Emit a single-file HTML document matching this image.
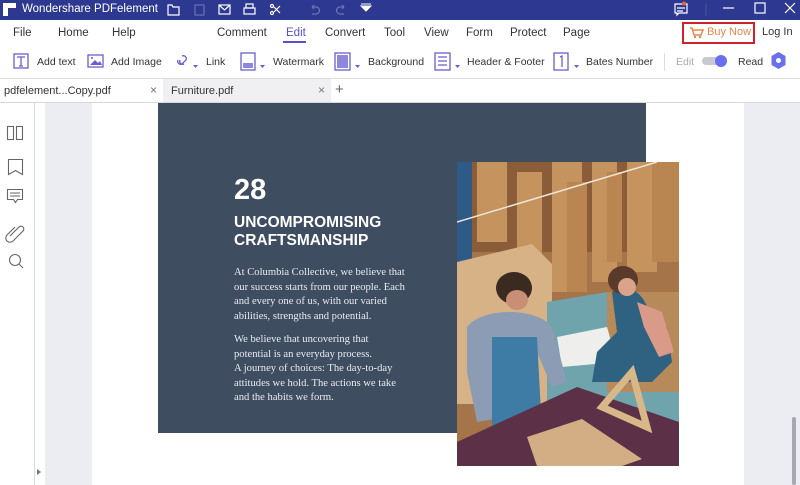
<!DOCTYPE html>
<html><head><meta charset="utf-8"><style>
*{margin:0;padding:0;box-sizing:border-box}
body{width:800px;height:485px;overflow:hidden;background:#fff;font-family:"Liberation Sans",sans-serif;position:relative;color:#333}
.a{position:absolute;white-space:nowrap}
.m{font-size:11.5px;color:#333;top:27px}
.t{font-size:10.5px;color:#333;top:56px}
.ser{font-family:"Liberation Serif",serif;font-size:10.6px;color:#e8ecf2;line-height:14.6px}
</style></head><body>
<div class="a" style="left:0;top:0;width:800px;height:20px;background:#2d3990"></div>
<svg class="a" style="left:0;top:0" width="800" height="20">
<rect x="3" y="3" width="13" height="13" fill="#fff"/><rect x="8" y="8" width="8" height="8" fill="#2d3990"/>
<g fill="none" stroke="#fff" stroke-width="1.2">
<path d="M168 5h4l1 2h6v8h-11z"/>
<rect x="195" y="5" width="9" height="10" stroke="#6b74b5"/>
<rect x="219" y="5" width="11" height="9"/><path d="M219 5l5.5 5 5.5-5"/>
<rect x="244" y="8" width="11" height="6"/><rect x="246" y="4" width="7" height="4"/>
<circle cx="272" cy="6" r="1.5"/><circle cx="272" cy="13" r="1.5"/><path d="M274 7l6 6M274 12l6-6"/>
<path d="M312 7h4a3 3 0 010 7h-4M312 7l2-2M312 7l2 2" stroke="#6b74b5"/>
<path d="M344 7h-4a3 3 0 000 7h4M344 7l-2-2M344 7l-2 2" stroke="#6b74b5"/>
<path d="M675 4h12v9h-8l-2 2v-2h-2z"/><path d="M677 8h8M677 11h6"/>
<path d="M723 8h11"/><rect x="755" y="3" width="10" height="10"/><path d="M785 3l10 10M795 3l-10 10"/>
</g>
<path d="M361 4h10M361 6h10l-5 5z" fill="#fff" stroke="#fff"/>
<circle cx="684" cy="3.5" r="2" fill="#e8623a"/>
<path d="M706 4v12" stroke="#4a55a0"/>
</svg>
<div class="a" style="left:22px;top:3px;color:#fff;font-size:11.5px">Wondershare PDFelement</div>
<div class="a m" style="left:13px">File</div>
<div class="a m" style="left:58px">Home</div>
<div class="a m" style="left:112px">Help</div>
<div class="a m" style="left:217px">Comment</div>
<div class="a m" style="left:286px;color:#5a4fcf">Edit</div>
<div class="a" style="left:283px;top:41px;width:23px;height:2px;background:#5a4fcf"></div>
<div class="a m" style="left:325px">Convert</div>
<div class="a m" style="left:384px">Tool</div>
<div class="a m" style="left:424px">View</div>
<div class="a m" style="left:466px">Form</div>
<div class="a m" style="left:510px">Protect</div>
<div class="a m" style="left:563px">Page</div>
<div class="a" style="left:682px;top:22px;width:73px;height:22px;border:2px solid #d0222c"></div>
<svg class="a" style="left:690px;top:27px" width="14" height="12"><path d="M0 1h2l2 7h7l2-5H3" fill="none" stroke="#e8874a" stroke-width="1.5"/><circle cx="5" cy="10" r="1.2" fill="#e8874a"/><circle cx="10" cy="10" r="1.2" fill="#e8874a"/></svg>
<div class="a" style="left:707px;top:26px;font-size:11px;color:#e8874a">Buy Now</div>
<div class="a" style="left:762px;top:26px;font-size:11px;color:#333">Log In</div>
<svg class="a" style="left:0;top:44px" width="800" height="36">
<g fill="none" stroke="#6a5fcf" stroke-width="1.3">
<rect x="14" y="10" width="14" height="14"/>
<path d="M17 13h8M21 13v9M19 22h4"/>
<rect x="88" y="11" width="15" height="12"/>
<path d="M182 12a3 3 0 014 4l-4 4a3 3 0 01-4-4M184 20a3 3 0 01-4-4"/>
<rect x="241" y="9" width="14" height="17"/>
<rect x="335" y="9" width="15" height="17"/>
<rect x="435" y="9" width="15" height="17"/><path d="M438 13h9M438 17h9M438 21h9"/>
<rect x="554" y="9" width="14" height="17"/><path d="M560 13l2-1v11"/>
</g>
<path d="M90 21l5-5 3 3 2-2 2 4z" fill="#6a5fcf"/><circle cx="92" cy="14" r="1" fill="#6a5fcf"/>
<rect x="243" y="19" width="10" height="5" fill="#8f86e0"/>
<rect x="337" y="11" width="11" height="13" fill="#8f86e0"/>
<g fill="#6a5fcf"><path d="M193 21h5l-2.5 3z"/><path d="M260 21h5l-2.5 3z"/><path d="M355 21h5l-2.5 3z"/><path d="M455 21h5l-2.5 3z"/><path d="M574 21h5l-2.5 3z"/></g>
<path d="M664.5 9v18" stroke="#ddd"/>
<rect x="702" y="13" width="24" height="8" rx="4" fill="#c8c8d0"/>
<circle cx="721" cy="17" r="6" fill="#6a6ff0"/>
<path d="M778.5 8l7 4v9l-7 4-7-4v-9z" fill="#6a6ff0"/><circle cx="778.5" cy="16.5" r="2.5" fill="#fff"/>
</svg>
<div class="a t" style="left:37px">Add text</div>
<div class="a t" style="left:111px">Add Image</div>
<div class="a t" style="left:206px">Link</div>
<div class="a t" style="left:273px">Watermark</div>
<div class="a t" style="left:368px">Background</div>
<div class="a t" style="left:467px">Header &amp; Footer</div>
<div class="a t" style="left:586px">Bates Number</div>
<div class="a t" style="left:676px;color:#aaa">Edit</div>
<div class="a t" style="left:738px">Read</div>
<div class="a" style="left:0;top:78px;width:800px;height:1px;background:#ddd"></div>
<div class="a" style="left:163px;top:79px;width:168px;height:24px;background:#f0f0f2"></div>
<div class="a" style="left:4px;top:85px;font-size:11px">pdfelement...Copy.pdf</div>
<div class="a" style="left:150px;top:83px;font-size:12px;color:#777">×</div>
<div class="a" style="left:171px;top:85px;font-size:11px">Furniture.pdf</div>
<div class="a" style="left:318px;top:83px;font-size:12px;color:#777">×</div>
<div class="a" style="left:335px;top:81px;font-size:15px;color:#666">+</div>
<div class="a" style="left:0;top:102px;width:800px;height:1px;background:#d8d8dc"></div>
<div class="a" style="left:34px;top:103px;width:1px;height:382px;background:#ddd"></div>
<div class="a" style="left:45px;top:103px;width:47px;height:382px;background:#ecedf3"></div>
<div class="a" style="left:744px;top:103px;width:56px;height:382px;background:#ecedf3"></div>
<div class="a" style="left:792px;top:417px;width:4px;height:68px;background:#a8a8b4;border-radius:2px"></div>
<svg class="a" style="left:0;top:103px" width="45" height="382">
<g fill="none" stroke="#666" stroke-width="1.1">
<rect x="7.5" y="23.5" width="6" height="13"/><rect x="16.5" y="23.5" width="6" height="13"/>
<path d="M8.5 56.5h14v15l-7-4-7 4z"/>
<path d="M7.5 86.5h15v10h-5l-2 3-2-3h-6z"/><path d="M10 90h10M10 93h10"/>
<path d="M10 133l9-9a2.5 2.5 0 014 4l-10 10a4 4 0 01-6-6l8-8"/>
<circle cx="15" cy="157" r="5.5"/><path d="M19 161l4 4"/>
</g>
<path d="M37 366l4 3-4 3z" fill="#777"/>
</svg>
<div class="a" style="left:158px;top:103px;width:488px;height:330px;background:#3f4d60"></div>
<div class="a" style="left:234px;top:174px;font-size:29px;font-weight:bold;color:#fff">28</div>
<div class="a" style="left:234px;top:214px;font-size:15.5px;font-weight:bold;color:#fff;line-height:18px">UNCOMPROMISING<br>CRAFTSMANSHIP</div>
<div class="a ser" style="left:234px;top:266px">At Columbia Collective, we believe that<br>our success starts from our people. Each<br>and every one of us, with our varied<br>abilities, strengths and potential.</div>
<div class="a ser" style="left:234px;top:333px">We believe that uncovering that<br>potential is an everyday process.<br>A journey of choices: The day-to-day<br>attitudes we hold. The actions we take<br>and the habits we form.</div>
<svg class="a" style="left:457px;top:162px" width="222" height="304">
<rect width="222" height="304" fill="#a57448"/>
<rect x="0" y="0" width="222" height="90" fill="#8a5c38"/>
<path d="M20 0h30v80H20zM60 10h25v100H60zM95 0h30v130H95zM135 0h25v120h-25zM170 0h30v110h-30z" fill="#c4935e"/>
<path d="M110 20h20v110h-20zM150 10h15v90h-15zM195 0h27v100h-27z" fill="#b98550"/>
<rect x="0" y="0" width="15" height="100" fill="#2d5a86"/>
<path d="M0 100l75-18 20 20v140H0z" fill="#d6b286"/>
<path d="M90 140l60-10 72 10v160H90z" fill="#6fa4ac"/>
<path d="M150 130h72v100h-72z" fill="#b78a5a"/>
<path d="M0 60L200 0" stroke="#f0e6d8" stroke-width="1.5"/>
<path d="M100 175l50-10 10 35-55 5z" fill="#eeeeec"/>
<path d="M155 130c15-10 30 0 35 15l20 20 5 35-20 20-60 0 5-30 20-20z" fill="#2f6180"/>
<path d="M180 140l25 10 12 40-15 5-15-30z" fill="#d99a8a"/>
<ellipse cx="166" cy="118" rx="15" ry="14" fill="#5a3a2a"/>
<ellipse cx="170" cy="125" rx="9" ry="9" fill="#d9a48a"/>
<path d="M10 165c15-20 70-20 85 0l15 55-15 5-15-35 0 60-60 10-10-50z" fill="#8b9cb4"/>
<path d="M35 175l45 0 5 95-50 0z" fill="#3e7ca6"/>
<ellipse cx="57" cy="126" rx="18" ry="16" fill="#3a2a20"/>
<ellipse cx="60" cy="138" rx="11" ry="10" fill="#c98f74"/>
<path d="M0 280l120-55 102 35v44H0z" fill="#5c3148"/>
<path d="M70 275l55-18 60 40-20 7H80z" fill="#d3ae84"/>
<path d="M175 210l15 55-45-20z" fill="none" stroke="#d8b888" stroke-width="7"/>
</svg>
</body></html>
